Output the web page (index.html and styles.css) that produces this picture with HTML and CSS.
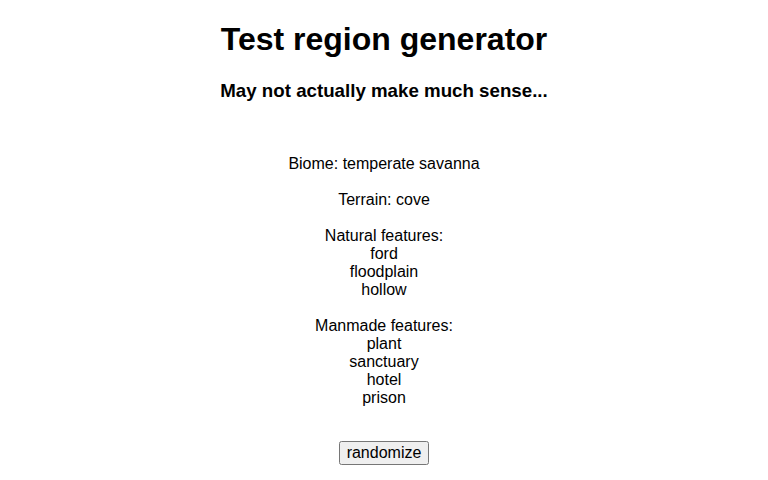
FILE: index.html
```html
<!DOCTYPE html>
<html>
<head>
<meta charset="utf-8">
<title>Test region generator</title>
<link rel="stylesheet" href="styles.css">
</head>
<body>
<h1 class="title">Test region generator</h1>
<h3 class="subtitle">May not actually make much sense...</h3>
<div class="details">
  <p class="item">Biome: temperate savanna</p>
  <p class="item">Terrain: cove</p>
  <p class="item">Natural features:<br>ford<br>floodplain<br>hollow</p>
  <p class="item">Manmade features:<br>plant<br>sanctuary<br>hotel<br>prison</p>
</div>
<div class="actions">
  <button class="btn" type="button">randomize</button>
</div>
</body>
</html>
```

FILE: styles.css
```css
body {
  margin: 0 8px;
  font-family: "Liberation Sans", Arial, sans-serif;
  color: #000;
  background: #fff;
  text-align: center;
}
.title {
  font-size: 32px;
  font-weight: bold;
  margin: 21.44px 0;
}
.subtitle {
  font-size: 18.72px;
  font-weight: bold;
  margin: 18.72px 0 0;
}
.details {
  display: flex;
  flex-direction: column;
  gap: 18px;
  padding-top: 53px;
}
.item {
  margin: 0;
  font-size: 16px;
  line-height: 18px;
}
.actions {
  padding-top: 34px;
}
.btn {
  font-family: inherit;
  font-size: 16px;
}
```
